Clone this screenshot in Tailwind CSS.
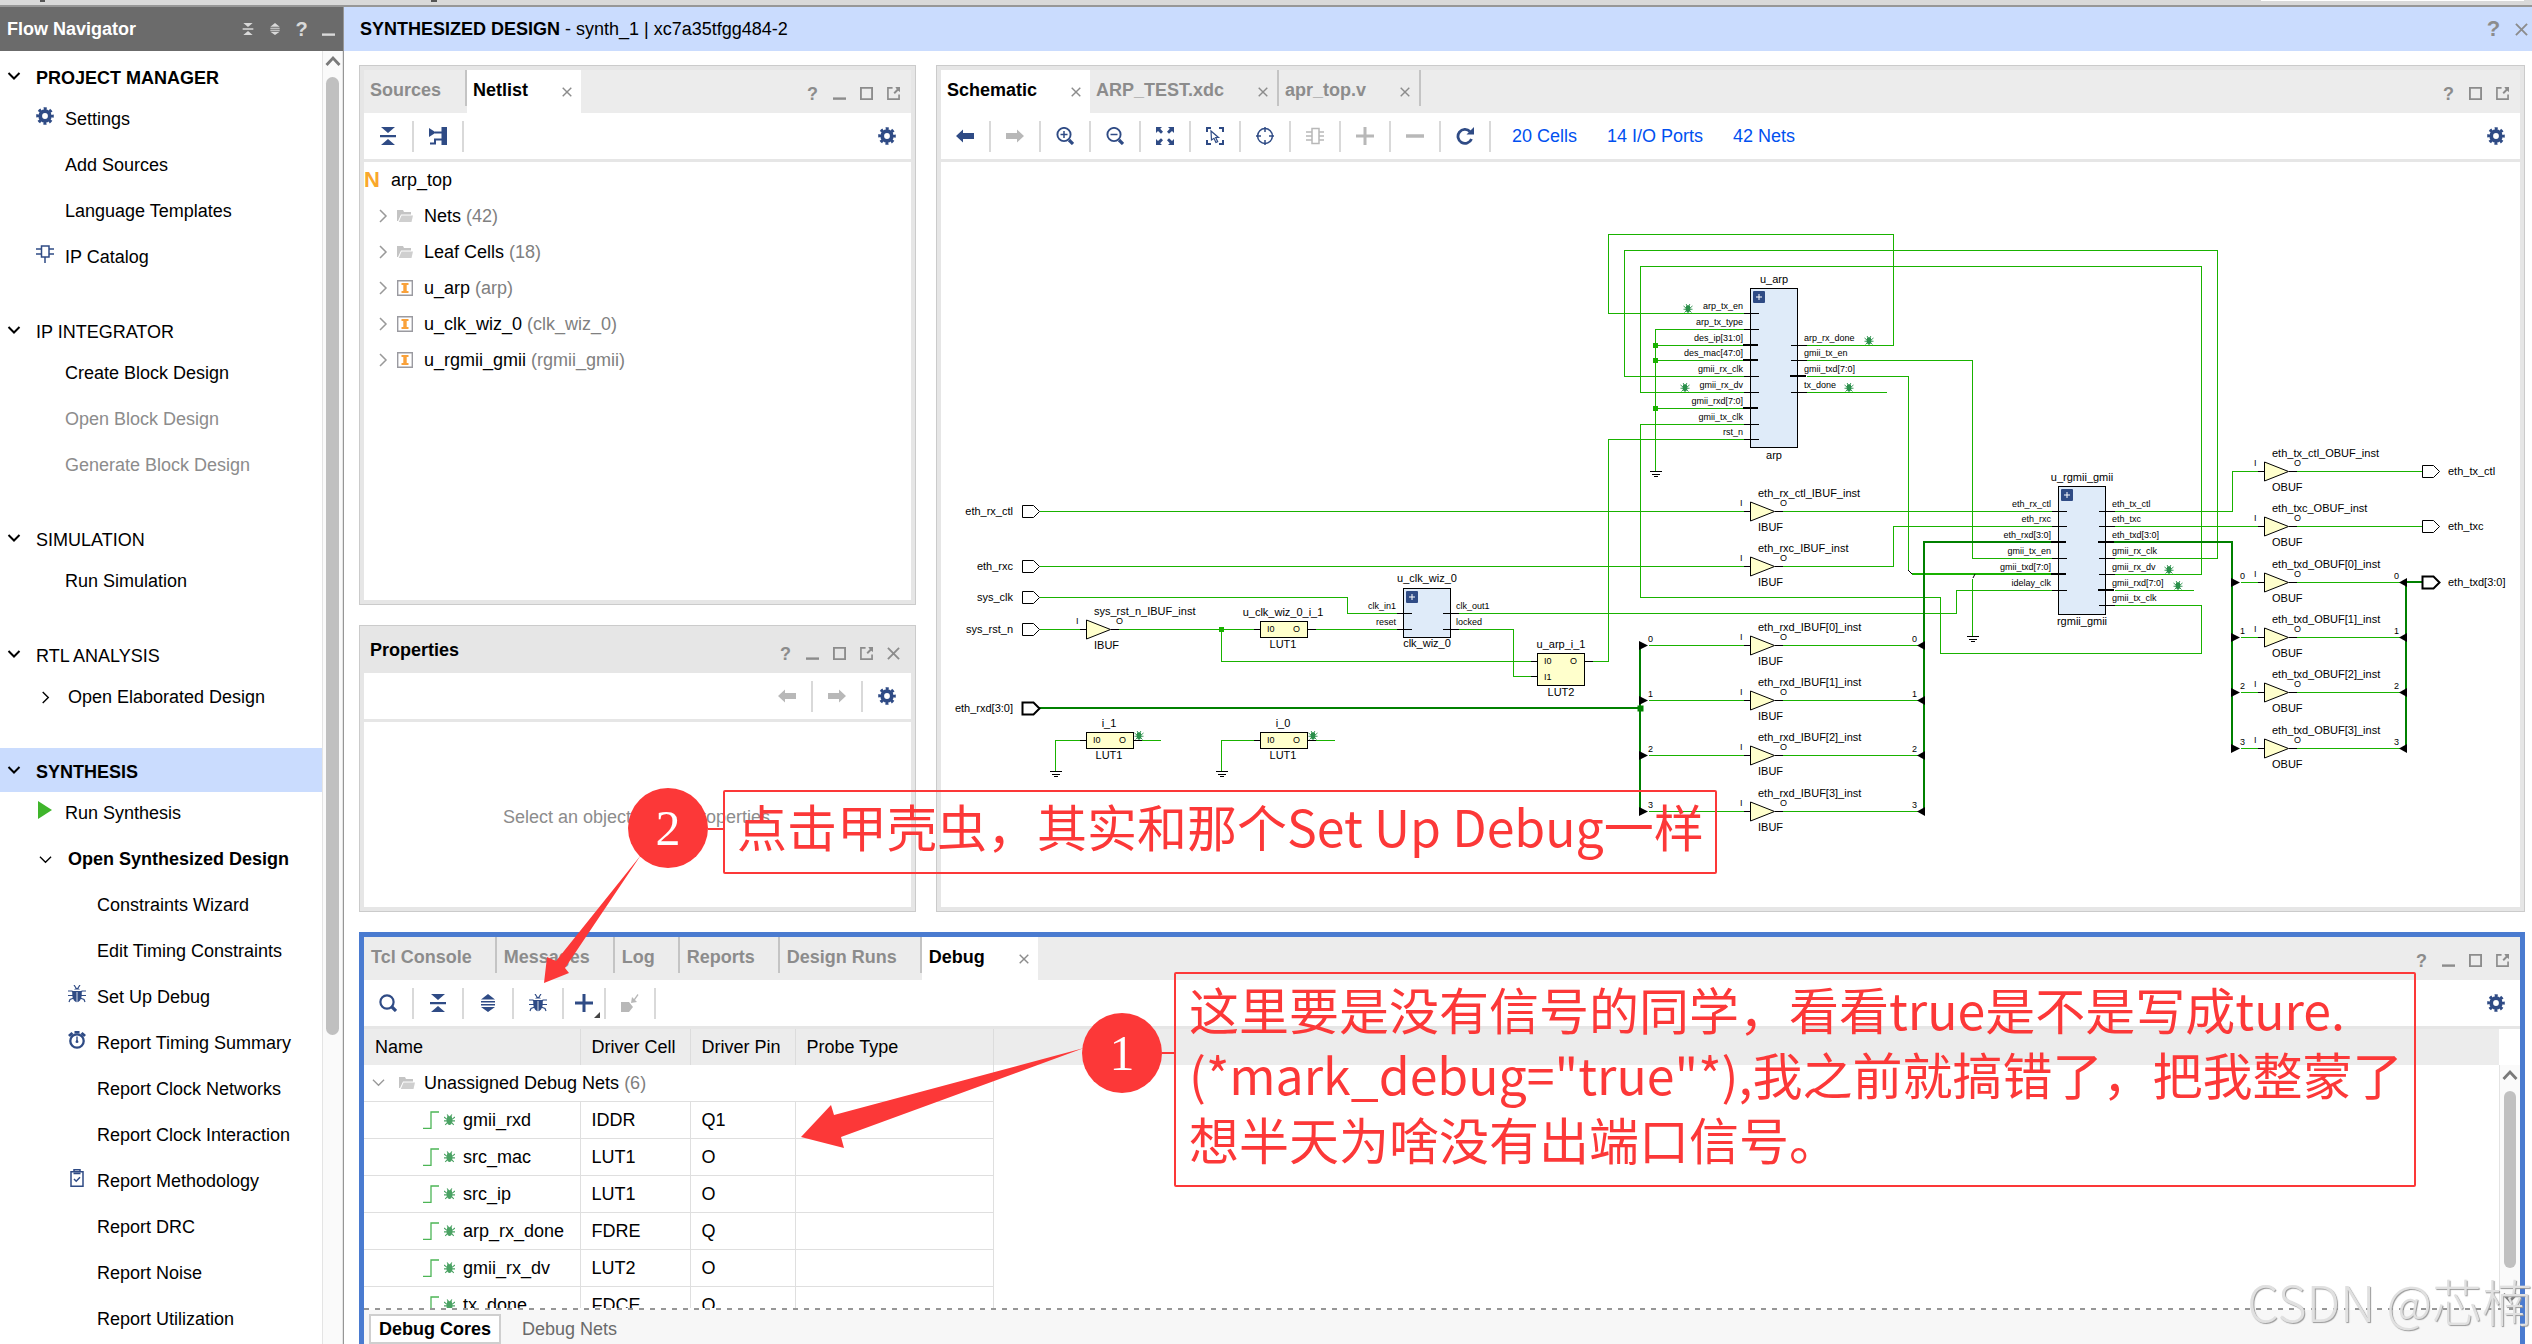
<!DOCTYPE html>
<html lang="en">
<head>
<meta charset="utf-8">
<title>Synthesized Design</title>
<script src="https://cdn.jsdelivr.net/npm/@tailwindcss/browser@4"></script>
</head>
<body class="relative h-screen overflow-hidden bg-white font-['Liberation_Sans','Noto_Sans_CJK_SC',sans-serif] text-[18px] leading-6 text-black">

<svg class="hidden">
  <symbol id="gear" viewBox="0 0 18 18"><circle cx="9" cy="9" r="4.8" fill="none" stroke="currentColor" stroke-width="3.8"/><circle cx="9" cy="9" r="7.4" fill="none" stroke="currentColor" stroke-width="2.8" stroke-dasharray="3 2.81" stroke-dashoffset="1.5"/></symbol>
  <symbol id="chip" viewBox="0 0 18 18"><path d="M5.5 1h7.500v11H5.500zM0 4h5.500M0 9h5.500M12.500 4H18M12.500 9H18M9 12.500V18" fill="none" stroke="currentColor" stroke-width="1.5"/></symbol>
  <symbol id="chip2" viewBox="0 0 18 18"><path d="M6 1.500h7v15H6zM0 5h6M0 9h6M0 13h6M13 5h5M13 9h5M13 13h5" fill="none" stroke="currentColor" stroke-width="1.5"/></symbol>
  <symbol id="collapse" viewBox="0 0 18 18"><path d="M2 0h14L9 6zM1 8h16v2.200H1zM2 18h14L9 12z" fill="currentColor"/></symbol>
  <symbol id="expand" viewBox="0 0 18 18"><path d="M9 0l7 5.500H2zM2 7h14v1.500H2zM2 10h14v1.500H2zM9 18l7-5H2z" fill="currentColor"/></symbol>
  <symbol id="bug" viewBox="0 0 18 18"><path d="M6 0l2 3M12 0l-2 3M0 6h4l2 2M18 6h-4l-2 2M0 10.500h18M1 17l1-2.500 4-1.500M17 17l-1-2.500-4-1.500" fill="none" stroke="currentColor" stroke-width="1.200"/><path d="M6 4.500Q9 1 12 4.500zM4.500 6h9q1 6-1.500 9.500-3 3.500-6 0Q3.500 12 4.500 6z" fill="currentColor"/><path d="M9 7v10" stroke="white" stroke-width=".8"/></symbol>
  <symbol id="minibug" viewBox="0 0 18 18"><path d="M5 0l3 4M13 0l-3 4M0 4l5 4M18 4l-5 4M0 10.500h18M2 17l4-4M16 17l-4-4" fill="none" stroke="currentColor" stroke-width="1.800"/><path d="M5 3h8v3q2 6-1 9.500-3 3.500-6 0Q3 12 5 6z" fill="currentColor"/></symbol>
  <symbol id="clock" viewBox="0 0 18 18"><circle cx="9" cy="10" r="6.700" fill="none" stroke="currentColor" stroke-width="2.300"/><path d="M6.500 0h5v2.500h-5zM0 4l3.500-3 2 2-3.500 3zM18 4l-3.500-3-2 2 3.500 3zM8.300 5.500h1.400v3.500q1.800 2.800-.7 3-2.500-.2-.7-3z" fill="currentColor"/></symbol>
  <symbol id="clip" viewBox="0 0 18 18"><path d="M3 2.700h12V17.200H3zM6 2.500v-1.700h6v1.700M5.500 4.500h7" fill="none" stroke="currentColor" stroke-width="1.500"/><path d="M6 10l2.200 2.200L12 8.200" fill="none" stroke="currentColor" stroke-width="1.500"/></symbol>
  <symbol id="play" viewBox="0 0 18 18"><path d="M2 0l14 9-14 9z" fill="currentColor"/></symbol>
  <symbol id="down" viewBox="0 0 14 14"><path d="M1.500 4l5.500 5.500L12.500 4" fill="none" stroke="currentColor" stroke-width="2"/></symbol>
  <symbol id="downthin" viewBox="0 0 14 14"><path d="M1 4l6 6 6-6" fill="none" stroke="currentColor" stroke-width="1.400"/></symbol>
  <symbol id="right" viewBox="0 0 14 14"><path d="M4 1l6 6-6 6" fill="none" stroke="currentColor" stroke-width="1.500"/></symbol>
  <symbol id="up" viewBox="0 0 16 12"><path d="M1.500 10L8 3l6.500 7" fill="none" stroke="currentColor" stroke-width="2.800"/></symbol>
  <symbol id="folder" viewBox="0 0 16 16"><path d="M0 2h6l1 2h7v2.500H4L1 13H0z" fill="#c4c4c4"/><path d="M4.500 7.500H16L14.500 14H1.800z" fill="#cfcfcf"/></symbol>
  <symbol id="inst" viewBox="0 0 16 16"><path d="M.7.700h14.600v14.600H.7z" fill="white" stroke="#9a9aa0" stroke-width="1.400"/><path d="M4.500 3h7v2H9.700v6h1.800v2h-7v-2h1.800V5H4.500z" fill="#f9a13a"/></symbol>
  <symbol id="hier" viewBox="0 0 18 18"><path d="M0 1l7 4.500L0 10z" fill="currentColor"/><path d="M6 5.500h7M1 16.500h5v-4h7" fill="none" stroke="currentColor" stroke-width="2"/><path d="M12.500 0H18v18h-5.500z" fill="currentColor"/></symbol>
  <symbol id="left" viewBox="0 0 18 18"><path d="M0 9l7-6.500V6h11v6H7v3.500z" fill="currentColor"/></symbol>
  <symbol id="fwd" viewBox="0 0 18 18"><path d="M18 9l-7-6.500V6H0v6h11v3.500z" fill="currentColor"/></symbol>
  <symbol id="zin" viewBox="0 0 18 18"><circle cx="8" cy="7.500" r="6.600" fill="none" stroke="currentColor" stroke-width="1.900"/><path d="M8 4v7M4.500 7.500h7" stroke="currentColor" stroke-width="1.500"/><path d="M13 13l4 4" stroke="currentColor" stroke-width="3.200"/></symbol>
  <symbol id="zout" viewBox="0 0 18 18"><circle cx="8" cy="7.500" r="6.600" fill="none" stroke="currentColor" stroke-width="1.900"/><path d="M4.500 7.500h7" stroke="currentColor" stroke-width="1.500"/><path d="M13 13l4 4" stroke="currentColor" stroke-width="3.200"/></symbol>
  <symbol id="search" viewBox="0 0 18 18"><circle cx="8" cy="8" r="6.600" fill="none" stroke="currentColor" stroke-width="2.200"/><path d="M13 13l4 4" stroke="currentColor" stroke-width="3.200"/></symbol>
  <symbol id="fit" viewBox="0 0 18 18"><path d="M0 0h6L4.200 1.800 7 4.800 5 6.800 2 4 0 6zM18 0h-6l1.800 1.800L11 4.800l2 2L16 4l2 2zM0 18h6l-1.800-1.800L7 13.200l-2-2L2 14l-2-2zM18 18h-6l1.800-1.800-2.800-3 2-2L16 14l2-2z" fill="currentColor"/></symbol>
  <symbol id="sel" viewBox="0 0 18 18"><path d="M1 5V1h4M13 1h4v4M17 13v4h-4M5 17H1v-4" fill="none" stroke="currentColor" stroke-width="2"/><path d="M5 4l7.500 6.500H9.700l2 4.200-1.800.8-1.900-4.200L5.500 13z" fill="none" stroke="currentColor" stroke-width="1.200"/></symbol>
  <symbol id="target" viewBox="0 0 18 18"><circle cx="9" cy="9" r="7.400" fill="none" stroke="currentColor" stroke-width="1.500"/><path d="M9 0v5M9 13v5M0 9h5M13 9h5" stroke="currentColor" stroke-width="1.500"/></symbol>
  <symbol id="plus" viewBox="0 0 18 18"><path d="M9 0v18M0 9h18" stroke="currentColor" stroke-width="3"/></symbol>
  <symbol id="minus" viewBox="0 0 18 18"><path d="M0 9h18" stroke="currentColor" stroke-width="3.500"/></symbol>
  <symbol id="reload" viewBox="0 0 18 18"><path d="M14 4.500A7 7 0 1 0 15.500 12" fill="none" stroke="currentColor" stroke-width="2.800"/><path d="M18 0v7.500h-7.500z" fill="currentColor"/></symbol>
  <symbol id="tag" viewBox="0 0 18 18"><path d="M0 8h8l4 5-4 5H0zM17.500 1L14 6l2 2-6 1 1-6 2 2 3.500-5z" fill="currentColor"/></symbol>
  <symbol id="close" viewBox="0 0 14 14"><path d="M1 1l12 12M13 1L1 13" stroke="currentColor" stroke-width="2"/></symbol>
  <symbol id="min" viewBox="0 0 14 14"><path d="M0 12.500h14" stroke="currentColor" stroke-width="2.600"/></symbol>
  <symbol id="max" viewBox="0 0 14 14"><path d="M1 1h12v12H1z" fill="none" stroke="currentColor" stroke-width="2"/></symbol>
  <symbol id="float" viewBox="0 0 14 14"><path d="M6 1H1v12h12V8" fill="none" stroke="currentColor" stroke-width="1.800"/><path d="M14 0v5.500l-2-1.500-3.500 3.500-1.500-1.500L10.500 2.500 9 0z" fill="currentColor"/></symbol>
  <symbol id="net" viewBox="0 0 16 18"><path d="M0 17.300h8V1H16" fill="none" stroke="#4cb556" stroke-width="1.300"/></symbol>
</svg>

<div class="flex h-full flex-col">
  <!-- lower edge of the main tool bar -->
  <div class="flex h-[7px] shrink-0 items-start justify-between border-b-2 border-[#979797] bg-[#d9d9d9]">
    <div class="flex"><span class="ml-10 h-[2px] w-[5px] bg-[#555]"></span><span class="ml-[386px] h-[2px] w-[6px] bg-[#555]"></span></div>
    <span class="mr-2 h-px w-[263px] bg-white"></span>
  </div>

  <div class="flex min-h-0 flex-1">
    <!-- Flow Navigator -->
    <aside class="flex w-[344px] shrink-0 flex-col border-r border-[#969696]">
      <header class="flex h-11 shrink-0 items-center bg-[#6b6b6b] pl-[7px] pr-px text-[#d9d9d9]">
        <h2 class="flex-1 font-bold text-white">Flow Navigator</h2>
        <div class="flex items-center">
          <button aria-label="Collapse all" class="flex w-[27px] justify-center"><svg class="h-4 w-3"><use href="#collapse"/></svg></button>
          <button aria-label="Expand all" class="flex w-[27px] justify-center"><svg class="h-4 w-3"><use href="#expand"/></svg></button>
          <button aria-label="Help" class="w-[27px] text-[20px] font-bold">?</button>
          <button aria-label="Minimize" class="flex w-[27px] justify-center"><svg class="size-[13px]"><use href="#min"/></svg></button>
        </div>
      </header>
      <div class="flex min-h-0 flex-1">
        <nav id="nav" class="min-w-0 flex-1 overflow-hidden pt-[3px]"></nav>
        <div class="flex w-[21px] flex-col items-center border-x border-[#e4e4e4] bg-[#fafafa] pt-1 text-[#7a7a7a]">
          <svg class="mb-2 h-3 w-4"><use href="#up"/></svg>
          <div class="mt-[2px] h-[958px] w-[13px] rounded-full bg-[#c0c0c0]"></div>
        </div>
      </div>
    </aside>

    <!-- Workspace -->
    <main class="flex min-w-0 flex-1 flex-col">
      <header class="flex h-11 shrink-0 items-center bg-[#cadcfe] pl-4">
        <h1 class="flex-1"><b>SYNTHESIZED DESIGN</b> - synth_1 | xc7a35tfgg484-2</h1>
        <div class="flex items-center gap-[3px] text-[#8c8c8c]">
          <button aria-label="Help" class="w-[27px] text-[22px] font-bold">?</button>
          <button aria-label="Close" class="flex w-[22px] justify-center"><svg class="size-[13px]"><use href="#close"/></svg></button>
        </div>
      </header>

      <div class="flex min-h-0 flex-1 flex-col gap-5 pl-[15px] pr-[7px] pt-[14px]">
        <div class="flex min-h-0 flex-1 gap-5">
          <div class="flex w-[557px] shrink-0 flex-col gap-5">
            <!-- Netlist -->
            <section class="flex min-h-0 flex-1 flex-col border border-[#cbcbcb] bg-[#e6e6e6] p-1">
              <div class="flex h-[43px] shrink-0 bg-[#ececec] font-bold text-[#8c8c8c]">
                <button class="flex h-9 border-r-2 border-[#c4c4c4] pl-[6px] pr-6 pt-2">Sources</button>
                <button class="flex h-full items-start bg-white pl-[6px] pr-[9px] pt-2 text-black">Netlist<svg class="ml-[34px] mt-[9px] size-[10px] text-[#8c8c8c]"><use href="#close"/></svg></button>
                <div data-win="?,min,max,float" class="ml-auto flex items-center pr-1 pt-1"></div>
              </div>
              <div class="mb-[3px] flex h-[46px] shrink-0 items-center bg-white text-[#2f4b85]">
                <div data-tools="collapse,hier" class="flex items-center"></div>
                <button aria-label="Settings" class="ml-auto flex w-12 justify-center"><svg class="size-[18px]"><use href="#gear"/></svg></button>
              </div>
              <ul class="flex-1 bg-white text-[#808080]">
                <li class="flex h-9 items-center"><span class="w-[27px] text-[22px] font-bold text-[#f9a72b]">N</span><span class="text-black">arp_top</span></li>
                <li class="flex h-9 items-center pl-3"><svg class="size-[14px] text-[#999]"><use href="#right"/></svg><svg class="ml-[7px] mr-[11px] size-4"><use href="#folder"/></svg><span class="text-black">Nets</span>&nbsp;(42)</li>
                <li class="flex h-9 items-center pl-3"><svg class="size-[14px] text-[#999]"><use href="#right"/></svg><svg class="ml-[7px] mr-[11px] size-4"><use href="#folder"/></svg><span class="text-black">Leaf Cells</span>&nbsp;(18)</li>
                <li class="flex h-9 items-center pl-3"><svg class="size-[14px] text-[#999]"><use href="#right"/></svg><svg class="ml-[7px] mr-[11px] size-4"><use href="#inst"/></svg><span class="text-black">u_arp</span>&nbsp;(arp)</li>
                <li class="flex h-9 items-center pl-3"><svg class="size-[14px] text-[#999]"><use href="#right"/></svg><svg class="ml-[7px] mr-[11px] size-4"><use href="#inst"/></svg><span class="text-black">u_clk_wiz_0</span>&nbsp;(clk_wiz_0)</li>
                <li class="flex h-9 items-center pl-3"><svg class="size-[14px] text-[#999]"><use href="#right"/></svg><svg class="ml-[7px] mr-[11px] size-4"><use href="#inst"/></svg><span class="text-black">u_rgmii_gmii</span>&nbsp;(rgmii_gmii)</li>
              </ul>
            </section>
            <!-- Properties -->
            <section class="flex h-[287px] shrink-0 flex-col border border-[#cbcbcb] bg-[#e6e6e6] p-1">
              <div class="flex h-[43px] shrink-0 items-center pl-[6px]">
                <h2 class="mb-1 font-bold">Properties</h2>
                <div data-win="?,min,max,float,close" class="ml-auto flex items-center pr-1 pt-1"></div>
              </div>
              <div class="mb-[3px] flex h-[46px] shrink-0 items-center justify-end bg-white text-[#b8b8b8]">
                <div data-tools="left,fwd" class="flex items-center"></div>
                <button aria-label="Settings" class="flex w-12 justify-center text-[#2f4b85]"><svg class="size-[18px]"><use href="#gear"/></svg></button>
              </div>
              <div class="flex flex-1 items-center justify-center bg-white pr-[2px] pt-1 text-[#8c8c8c]">Select an object to see properties</div>
            </section>
          </div>

          <!-- Schematic -->
          <section class="flex min-w-0 flex-1 flex-col border border-[#cbcbcb] bg-[#e6e6e6] p-1">
            <div class="flex h-[43px] shrink-0 bg-[#ececec] font-bold text-[#8c8c8c]">
              <button class="flex h-full items-start bg-white pl-[6px] pr-[9px] pt-2 text-black">Schematic<svg class="ml-[34px] mt-[9px] size-[10px] text-[#8c8c8c]"><use href="#close"/></svg></button>
              <button class="flex h-9 items-start border-r-2 border-[#c4c4c4] pl-[6px] pr-[9px] pt-2">ARP_TEST.xdc<svg class="ml-[34px] mt-[9px] size-[10px]"><use href="#close"/></svg></button>
              <button class="flex h-9 items-start border-r-2 border-[#c4c4c4] pl-[6px] pr-[9px] pt-2">apr_top.v<svg class="ml-[34px] mt-[9px] size-[10px]"><use href="#close"/></svg></button>
              <div data-win="?,max,float" class="ml-auto flex items-center pr-1 pt-1"></div>
            </div>
            <div class="mb-[3px] flex h-[46px] shrink-0 items-center bg-white text-[#2f4b85]">
              <div data-tools="left,fwd*,zin,zout,fit,sel,target,chip2*,plus*,minus*,reload" class="flex items-center"></div>
              <div class="ml-[21px] flex gap-[30px] text-[#0050f0]"><a href="#cells">20 Cells</a><a href="#ports">14 I/O Ports</a><a href="#nets">42 Nets</a></div>
              <button aria-label="Settings" class="ml-auto flex w-12 justify-center"><svg class="size-[18px]"><use href="#gear"/></svg></button>
            </div>
            <div class="min-h-0 flex-1 bg-white"><svg id="sch" viewBox="941 162 1579 745" class="block h-full w-full"></svg></div>
          </section>
        </div>

        <!-- Debug -->
        <section class="flex h-[412px] shrink-0 flex-col border-x-5 border-t-5 border-[#4a7bd0] bg-[#e6e6e6]">
          <div class="flex h-[43px] shrink-0 bg-[#ececec] font-bold text-[#8c8c8c]">
            <button class="flex h-9 border-r-2 border-[#c4c4c4] pl-[7px] pr-[23px] pt-2">Tcl Console</button>
            <button class="flex h-9 border-r-2 border-[#c4c4c4] pl-[7px] pr-[23px] pt-2">Messages</button>
            <button class="flex h-9 border-r-2 border-[#c4c4c4] pl-[7px] pr-[23px] pt-2">Log</button>
            <button class="flex h-9 border-r-2 border-[#c4c4c4] pl-[7px] pr-[23px] pt-2">Reports</button>
            <button class="flex h-9 border-r-2 border-[#c4c4c4] pl-[7px] pr-[23px] pt-2">Design Runs</button>
            <button class="flex h-full items-start bg-white pl-[7px] pr-[9px] pt-2 text-black">Debug<svg class="ml-[34px] mt-[9px] size-[10px] text-[#8c8c8c]"><use href="#close"/></svg></button>
            <div data-win="?,min,max,float" class="ml-auto flex items-center pr-1 pt-1"></div>
          </div>
          <div class="mb-[3px] flex h-[46px] shrink-0 items-center bg-white text-[#2f4b85]">
            <div data-tools="search,collapse,expand,bug" class="flex items-center"></div>
            <button aria-label="Add" class="relative flex w-10 justify-center"><svg class="size-[18px]"><use href="#plus"/></svg><svg class="absolute -bottom-[6px] right-1 size-[6px]" viewBox="0 0 6 6"><path d="M6 0v6H0z" fill="#444"/></svg></button>
            <span class="h-[31px] w-[2px] bg-[#d9d9d9]"></span>
            <div data-tools="tag*" class="flex items-center"></div>
            <button aria-label="Settings" class="ml-auto flex w-12 justify-center"><svg class="size-[18px]"><use href="#gear"/></svg></button>
          </div>
          <div class="flex min-h-0 flex-1 bg-white">
            <div class="min-w-0 flex-1 overflow-hidden">
              <table class="w-full table-fixed border-collapse text-left">
                <thead><tr class="h-9 bg-[#ececec]">
                  <th class="w-[216px] border-r border-[#dcdcdc] pl-[11px] font-normal">Name</th>
                  <th class="w-[110px] border-r border-[#dcdcdc] pl-[11px] font-normal">Driver Cell</th>
                  <th class="w-[105px] border-r border-[#dcdcdc] pl-[11px] font-normal">Driver Pin</th>
                  <th class="w-[198px] border-r border-[#dcdcdc] pl-[11px] font-normal">Probe Type</th>
                  <th></th>
                </tr></thead>
                <tbody id="rows"></tbody>
              </table>
            </div>
            <div class="mt-9 flex w-[21px] flex-col items-center border-l border-[#e4e4e4] bg-[#fafafa] pt-1 text-[#7a7a7a]">
              <svg class="mb-[10px] h-3 w-4"><use href="#up"/></svg>
              <div class="min-h-0 w-[12px] flex-1 rounded-full bg-[#c0c0c0]"></div>
              <svg class="mb-1 mt-6 h-3 w-4 rotate-180"><use href="#up"/></svg>
            </div>
          </div>
          <svg class="h-[2px] w-full shrink-0 bg-white"><path d="M0 1h3000" stroke="#969696" stroke-width="2" stroke-dasharray="5 6"/></svg>
          <div class="flex h-[34px] shrink-0 items-end bg-[#f7f7f7] pl-[5px]">
            <button class="h-[30px] border-2 border-[#cfcfcf] bg-white px-2 font-bold">Debug Cores</button>
            <button class="ml-[21px] h-[30px] text-[#6a6a6a]">Debug Nets</button>
          </div>
        </section>
      </div>
    </main>
  </div>
</div>

<!-- Annotations over the window -->
<svg class="pointer-events-none absolute left-0 top-0 h-[1344px] w-[2532px] text-[#fc3838]" viewBox="0 0 2532 1344">
  <path d="M544 983L547 957 556 961 641 855 565 968 569 973zM801 1137L831 1105 834 1115 1084 1048 841 1137 844 1148z" fill="currentColor"/>
  <path d="M708 829h16M1162 1053h13" stroke="currentColor" stroke-width="2"/>
</svg>
<div class="absolute left-[628px] top-[788px] flex size-20 items-center justify-center rounded-full bg-[#fc3838] font-['Liberation_Serif',serif] text-[50px] text-white">2</div>
<div class="absolute left-[1082px] top-[1013px] flex size-20 items-center justify-center rounded-full bg-[#fc3838] font-['Liberation_Serif',serif] text-[50px] text-white">1</div>
<p class="absolute left-[723px] top-[790px] h-[84px] w-[994px] whitespace-nowrap rounded-xs border-2 border-[#fc3838] pl-3 font-['Noto_Sans_CJK_SC',sans-serif] text-[50px] leading-[66px] text-[#fc3838]">点击甲壳虫，其实和那个Set Up Debug一样</p>
<p class="absolute left-[1174px] top-[972px] h-[215px] w-[1242px] whitespace-nowrap rounded-xs border-2 border-[#fc3838] pl-[13px] pt-[2px] font-['Noto_Sans_CJK_SC',sans-serif] text-[50px] leading-[65px] text-[#fc3838]">这里要是没有信号的同学，看看true是不是写成ture.<br>(*mark_debug="true"*),我之前就搞错了，把我整蒙了<br>想半天为啥没有出端口信号。</p>
<p class="absolute bottom-[9px] right-0 whitespace-nowrap font-['Noto_Sans_CJK_SC',sans-serif] text-[50px] font-light leading-[70px] text-[#e0e0e0] [text-shadow:1px_1px_1px_#999]">CSDN @芯楠</p>

<script>
const svg = (id, cls) => `<svg class="${cls}"><use href="#${id}"/></svg>`;

/* window buttons and tool buttons */
document.querySelectorAll('[data-win]').forEach(el => {
  el.innerHTML = el.dataset.win.split(',').map(n => n === '?'
    ? '<button aria-label="Help" class="w-[27px] text-[18px] font-bold text-[#8c8c8c]">?</button>'
    : `<button aria-label="${n}" class="flex w-[27px] justify-center text-[#8c8c8c]">${svg(n, 'size-[13px]')}</button>`).join('');
});
document.querySelectorAll('[data-tools]').forEach(el => {
  el.innerHTML = el.dataset.tools.split(',').map(n => {
    const off = n.endsWith('*'), id = n.replace('*', '');
    return `<button aria-label="${id}" ${off ? 'disabled' : ''} class="flex w-12 justify-center ${off ? 'text-[#b8b8b8]' : ''}">${svg(id, 'size-[18px]')}</button><span class="h-[31px] w-[2px] bg-[#d9d9d9]"></span>`;
  }).join('');
});

/* flow navigator: [title, bold, selected, [label, icon, level, style]] */
const nav = [
  ['PROJECT MANAGER', 1, 0, [['Settings','gear'],['Add Sources'],['Language Templates'],['IP Catalog','chip']]],
  ['IP INTEGRATOR', 0, 0, [['Create Block Design'],['Open Block Design','',0,'off'],['Generate Block Design','',0,'off']]],
  ['SIMULATION', 0, 0, [['Run Simulation']]],
  ['RTL ANALYSIS', 0, 0, [['Open Elaborated Design','right',1]]],
  ['SYNTHESIS', 1, 1, [['Run Synthesis','play'],['Open Synthesized Design','downthin',1,'bold'],['Constraints Wizard','',2],['Edit Timing Constraints','',2],['Set Up Debug','bug',2],['Report Timing Summary','clock',2],['Report Clock Networks','',2],['Report Clock Interaction','',2],['Report Methodology','clip',2],['Report DRC','',2],['Report Noise','',2],['Report Utilization','',2]]],
];
document.getElementById('nav').innerHTML = nav.map(([t, b, s, items]) => `
<section class="mb-7"><h3 class="flex h-11 items-center pl-[7px] pt-1 ${b ? 'font-bold' : ''} ${s ? 'bg-[#cadcfe]' : ''}">${svg('down', 'mb-1 mr-[15px] size-[14px]')}${t}</h3>
<ul class="-mt-[2px]">${items.map(([n, ic, lv, st]) => {
  const pad = lv === 2 ? 'pl-[68px]' : lv === 1 ? 'pl-[39px]' : 'pl-9';
  const size = lv === 1 ? 'size-[13px]' : 'mb-[6px] size-[18px]';
  const col = ic === 'play' ? 'text-[#3fb52b]' : lv === 1 ? 'text-black' : 'text-[#2f4b85]';
  return `<li><a href="#" class="flex h-[46px] items-center ${pad} ${st === 'off' ? 'text-[#8c8c8c]' : ''} ${st === 'bold' ? 'font-bold' : ''}"><span class="w-[29px] ${col}">${ic ? svg(ic, size) : ''}</span>${n}</a></li>`;
}).join('')}</ul></section>`).join('');

/* debug nets */
document.getElementById('rows').innerHTML =
`<tr class="h-9"><td colspan="4" class="border-b border-r border-[#dfdfdf] pl-2"><span class="flex items-center">${svg('downthin', 'size-[13px] text-[#999]')}${svg('folder', 'ml-[14px] mr-[9px] size-4')}Unassigned Debug Nets&nbsp;<span class="text-[#808080]">(6)</span></span></td><td></td></tr>` +
[['gmii_rxd','IDDR','Q1'],['src_mac','LUT1','O'],['src_ip','LUT1','O'],['arp_rx_done','FDRE','Q'],['gmii_rx_dv','LUT2','O'],['tx_done','FDCE','Q']].map(([n, c, p]) =>
`<tr class="h-[37px]"><td class="border-b border-r border-[#dfdfdf] pl-[59px]"><span class="flex items-center">${svg('net', 'h-[18px] w-4')}${svg('minibug', 'ml-[5px] mr-2 h-3 w-[11px] text-[#4aa263]')}${n}</span></td><td class="border-b border-r border-[#dfdfdf] pl-[11px]">${c}</td><td class="border-b border-r border-[#dfdfdf] pl-[11px]">${p}</td><td class="border-b border-r border-[#dfdfdf]"></td><td></td></tr>`).join('');

/* schematic */
let o = '';
const G = '#19b200', D = '#008000', K = '#000';
const line = (pts, c = G, w = 1) => {
  const h = w === 1 ? .5 : 0;
  o += `<polyline points="${pts.map((v, i) => v + h).join(' ')}" fill="none" stroke="${c}" stroke-width="${w}" shape-rendering="crispEdges"/>`;
};
const text = (x, y, s, a = 'start', small) => o += `<text x="${x}" y="${y}" text-anchor="${a}" class="${small ? 'text-[9px]' : 'text-[11px]'}">${s}</text>`;
const bug = (x, y) => o += `<use href="#minibug" x="${x - 5}" y="${y - 4}" width="10" height="9" color="#2a8f4a"/>`;
const dot = (x, y, c = G, r = 2.5) => o += `<rect x="${x + .5 - r}" y="${y + .5 - r}" width="${2 * r}" height="${2 * r}" fill="${c}"/>`;
const gnd = (x, y) => { line([x - 6, y, x + 6, y], K); line([x - 4, y + 3, x + 4, y + 3], K); line([x - 2, y + 5, x + 2, y + 5], K); };
const rect = (x, y, w, h, f) => o += `<rect x="${x + .5}" y="${y + .5}" width="${w}" height="${h}" fill="${f}" stroke="#000" shape-rendering="crispEdges"/>`;
const plus = (x, y) => o += `<rect x="${x}" y="${y}" width="12" height="12" rx="1" fill="#2f4b85"/><path d="M${x + 6} ${y + 3}v6M${x + 3} ${y + 6}h6" stroke="white"/>`;
const pinL = (x, y, n, bus) => { line([x, y, x + 15, y], K, bus ? 2 : 1); text(x, y - 4, n, 'end', 1); };
const pinR = (x, y, n, bus) => { line([x - 16, y, x, y], K, bus ? 2 : 1); text(x - 2, y - 4, n, 'start', 1); };
const buf = (x, y, n, t) => {
  line([x - 7, y, x, y], K); line([x + 24, y, x + 32, y], K);
  o += `<path d="M${x + .5} ${y - 9}v19l24-9.500z" fill="#ffffcc" stroke="#000"/>`;
  text(x + 8, y - 14, n); text(x + 8, y + 20, t); text(x - 10, y - 5, 'I', 'start', 1); text(x + 30, y - 5, 'O', 'start', 1);
};
const port = (x, y, bus) => o += `<path d="M${x + .5} ${y - 5.500}h11l6 6-6 6h-11z" fill="white" stroke="#000" stroke-width="${bus ? 2 : 1}"/>`;
const tapR = (x, y, n) => { o += `<path d="M${x} ${y - 4}l9 4.500-9 4.500z"/>`; text(x + 9, y - 3, n, 'start', 1); };
const tapL = (x, y, n) => { o += `<path d="M${x} ${y - 4}l-8 4.500 8 4.500z"/>`; text(x - 8, y - 3, n, 'end', 1); };

/* nets */
line([1743,313,1608,313,1608,234,1893,234,1893,345,1806,345]);
line([1743,329,1655,329,1655,471]); [345,360,408].forEach(y => { line([1655,y,1743,y]); dot(1655,y); });
line([1743,376,1624,376,1624,250,2217,250,2217,558,2114,558]);
line([1743,392,1640,392,1640,266,2201,266,2201,574,2114,574]);
line([1743,424,1640,424,1640,597,1940,597,1940,653,2201,653,2201,605,2114,605]);
line([1743,439,1608,439,1608,661,1592,661]);
line([1806,360,1972,360,1972,558,2051,558]);
line([1806,376,1908,376,1908,570]); line([1912,574,2051,574], G, 2);
o += '<path d="M1908 570l4 4M1973 578l2-4" stroke="#000" fill="none"/>';
line([1972,578,1972,636]); line([1806,392,1886,392]);
line([1039,511,1743,511]); line([1782,511,2051,511]);
line([1039,566,1743,566]); line([1782,566,1893,566,1893,526,2051,526]);
line([1039,597,1347,597,1347,613,1396,613]);
line([1039,629,1080,629]); line([1118,629,1253,629]); line([1221,629,1221,661,1530,661]); dot(1221,629);
line([1315,629,1396,629]); line([1458,629,1513,629,1513,676,1530,676]);
line([1458,613,1956,613,1956,590,2051,590]);
line([1039,708,1640,708], D, 2); line([1640,645,1640,811], D, 2); dot(1640,708,D,3);
line([1924,811,1924,542,2051,542], D, 2);
line([2114,511,2232,511,2232,471,2257,471]); line([2114,526,2257,526]);
line([2114,542,2232,542,2232,748], D, 2); line([2114,590,2193,590]);
line([2406,748,2406,582,2422,582], D, 2); line([2296,471,2422,471]); line([2296,526,2422,526]);
gnd(1655,471); gnd(1972,636);

/* input side */
[[511,'eth_rx_ctl'],[566,'eth_rxc'],[597,'sys_clk'],[629,'sys_rst_n'],[708,'eth_rxd[3:0]',1]].forEach(([y, n, b]) => { port(1022, y, b); text(1013, y + 4, n, 'end'); });
buf(1086,629,'sys_rst_n_IBUF_inst','IBUF');
[[1260,621,'u_clk_wiz_0_i_1'],[1086,732,'i_1'],[1260,732,'i_0']].forEach(([x, y, n], i) => {
  line([x - 7, y + 8, x, y + 8], K); line([x + 47, y + 8, x + 55, y + 8], K); rect(x, y, 47, 16, '#ffffcc');
  text(x + 23, y - 5, n, 'middle'); text(x + 23, y + 27, 'LUT1', 'middle'); text(x + 7, y + 11, 'I0', 'start', 1); text(x + 40, y + 11, 'O', 'end', 1);
  if (i) { const l = i === 1 ? 1055 : 1221; line([x - 7, y + 8, l, y + 8, l, 771]); gnd(l, 771); line([x + 55, y + 8, x + 74, y + 8]); bug(x + 53, y + 3); }
});
rect(1403,588,47,49,'#dfebf9'); plus(1406,591); text(1427,582,'u_clk_wiz_0','middle'); text(1427,647,'clk_wiz_0','middle');
pinL(1396,613,'clk_in1'); pinL(1396,629,'reset'); pinR(1458,613,'clk_out1'); pinR(1458,629,'locked');
line([1530,661,1537,661], K); line([1530,676,1537,676], K); line([1584,661,1592,661], K); rect(1537,653,47,32,'#ffffcc');
text(1561,648,'u_arp_i_1','middle'); text(1561,696,'LUT2','middle'); text(1544,664,'I0','start',1); text(1544,680,'I1','start',1); text(1577,664,'O','end',1);

/* u_arp */
rect(1750,288,47,159,'#dfebf9'); plus(1753,291); text(1774,283,'u_arp','middle'); text(1774,459,'arp','middle');
[[313,'arp_tx_en'],[329,'arp_tx_type'],[345,'des_ip[31:0]',1],[360,'des_mac[47:0]',1],[376,'gmii_rx_clk'],[392,'gmii_rx_dv'],[408,'gmii_rxd[7:0]',1],[424,'gmii_tx_clk'],[439,'rst_n']].forEach(([y, n, b]) => pinL(1743, y, n, b));
[[345,'arp_rx_done'],[360,'gmii_tx_en'],[376,'gmii_txd[7:0]',1],[392,'tx_done']].forEach(([y, n, b]) => pinR(1806, y, n, b));
bug(1688,308); bug(1869,340); bug(1685,387); bug(1849,387);

/* input buffers */
buf(1750,511,'eth_rx_ctl_IBUF_inst','IBUF'); buf(1750,566,'eth_rxc_IBUF_inst','IBUF');
[645,700,755,811].forEach((y, i) => { line([1648,y,1743,y]); line([1782,y,1917,y]); buf(1750,y,`eth_rxd_IBUF[${i}]_inst`,'IBUF'); tapR(1639,y,i); tapL(1925,y,i); });

/* u_rgmii_gmii */
rect(2058,486,47,128,'#dfebf9'); plus(2061,489); text(2082,481,'u_rgmii_gmii','middle'); text(2082,625,'rgmii_gmii','middle');
[[511,'eth_rx_ctl'],[526,'eth_rxc'],[542,'eth_rxd[3:0]',1],[558,'gmii_tx_en'],[574,'gmii_txd[7:0]',1],[590,'idelay_clk']].forEach(([y, n, b]) => pinL(2051, y, n, b));
[[511,'eth_tx_ctl'],[526,'eth_txc'],[542,'eth_txd[3:0]',1],[558,'gmii_rx_clk'],[574,'gmii_rx_dv'],[590,'gmii_rxd[7:0]',1],[605,'gmii_tx_clk']].forEach(([y, n, b]) => pinR(2114, y, n, b));
bug(2169,569); bug(2178,585);

/* output buffers */
buf(2264,471,'eth_tx_ctl_OBUF_inst','OBUF'); buf(2264,526,'eth_txc_OBUF_inst','OBUF');
[582,637,692,748].forEach((y, i) => { line([2240,y,2257,y]); line([2296,y,2399,y]); buf(2264,y,`eth_txd_OBUF[${i}]_inst`,'OBUF'); tapR(2231,y,i); tapL(2407,y,i); });
[[471,'eth_tx_ctl'],[526,'eth_txc'],[582,'eth_txd[3:0]',1]].forEach(([y, n, b]) => { port(2422, y, b); text(2448, y + 4, n); });
document.getElementById('sch').innerHTML = o;
</script>
</body>
</html>
